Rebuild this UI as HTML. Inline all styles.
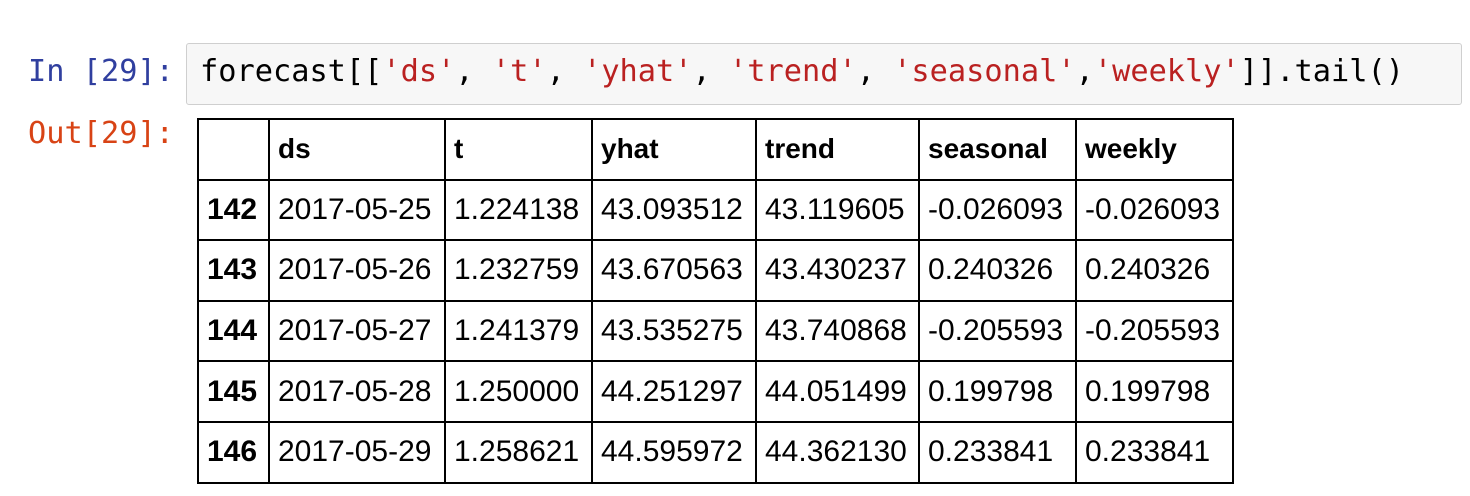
<!DOCTYPE html><html><head><style>
body{margin:0;background:#fff;width:1470px;height:496px;overflow:hidden;position:relative}
.mono{font-family:"DejaVu Sans Mono","Liberation Mono",monospace;font-size:30.3px;position:absolute;white-space:pre}
.box{position:absolute;left:186px;top:43px;width:1274px;height:60px;background:#f7f7f7;border:1px solid #cfcfcf;border-radius:3px}
.s{color:#ba2121}
table{position:absolute;left:197px;top:118px;border-collapse:collapse;font-family:"Liberation Sans",sans-serif;font-size:30px;color:#000;table-layout:fixed;width:1035px}
td,th{border:2px solid #000;height:58.6px;padding:0 0 0 8px;text-align:left;white-space:nowrap;overflow:hidden}
th{font-weight:bold}
tr:first-child th{font-size:28px}
</style></head><body>
<div class="mono" style="left:28px;top:54px;color:#303f9f">In [29]:</div>
<div class="box"></div>
<div class="mono" style="left:200px;top:54px;color:#000">forecast[[<span class="s">'ds'</span>, <span class="s">'t'</span>, <span class="s">'yhat'</span>, <span class="s">'trend'</span>, <span class="s">'seasonal'</span>,<span class="s">'weekly'</span>]].tail()</div>
<div class="mono" style="left:28px;top:116px;color:#d84315">Out[29]:</div>
<table>
<colgroup><col style="width:71px"><col style="width:176px"><col style="width:147px"><col style="width:164px"><col style="width:163px"><col style="width:157px"><col style="width:157px"></colgroup>
<tr><th></th><th>ds</th><th>t</th><th>yhat</th><th>trend</th><th>seasonal</th><th>weekly</th></tr>
<tr><th>142</th><td>2017-05-25</td><td>1.224138</td><td>43.093512</td><td>43.119605</td><td>-0.026093</td><td>-0.026093</td></tr>
<tr><th>143</th><td>2017-05-26</td><td>1.232759</td><td>43.670563</td><td>43.430237</td><td>0.240326</td><td>0.240326</td></tr>
<tr><th>144</th><td>2017-05-27</td><td>1.241379</td><td>43.535275</td><td>43.740868</td><td>-0.205593</td><td>-0.205593</td></tr>
<tr><th>145</th><td>2017-05-28</td><td>1.250000</td><td>44.251297</td><td>44.051499</td><td>0.199798</td><td>0.199798</td></tr>
<tr><th>146</th><td>2017-05-29</td><td>1.258621</td><td>44.595972</td><td>44.362130</td><td>0.233841</td><td>0.233841</td></tr>
</table>
</body></html>
